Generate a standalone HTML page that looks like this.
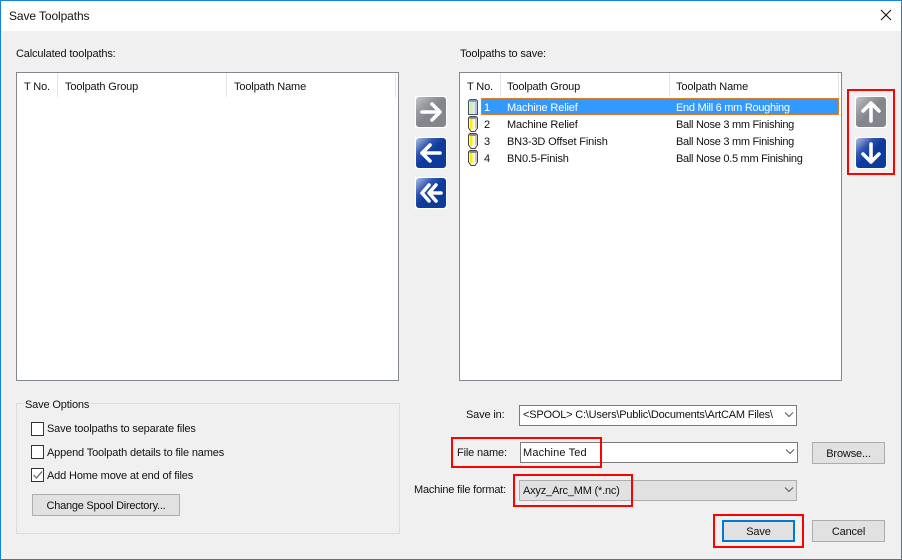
<!DOCTYPE html>
<html><head><meta charset="utf-8"><title>Save Toolpaths</title>
<style>
html,body{margin:0;padding:0;background:#f0f0f0}
#w{position:relative;width:902px;height:560px;overflow:hidden;background:#f0f0f0;font-family:"Liberation Sans",sans-serif;font-size:11px;color:#111;letter-spacing:-.15px}
#w div,#w svg{position:absolute;box-sizing:border-box}
.t{position:absolute;white-space:nowrap;line-height:16px;height:16px}
.n{letter-spacing:-.28px}
.list{background:#fff;border:1px solid #828790}
.sep{width:1px;background:#e5e5e5;top:73px;height:24px}
.red{border:2px solid #f00}
.btn{background:#e1e1e1;border:1px solid #adadad}
.combo{background:#fff;border:1px solid #7a7a7a}
.cb{background:#fff;border:1px solid #333;width:14px;height:14px}
.w{color:#fff}
</style></head><body>
<div id="w">
<svg width="0" height="0" style="left:0;top:0">
<defs>
<linearGradient id="gb" x1="0" y1="0" x2="1" y2="1"><stop offset="0" stop-color="#b4c2e4"/><stop offset=".3" stop-color="#2f55ae"/><stop offset=".5" stop-color="#0e3a9c"/><stop offset="1" stop-color="#0e3a9c"/></linearGradient>
<linearGradient id="gg" x1="0" y1="0" x2="1" y2="1"><stop offset="0" stop-color="#c2c4c8"/><stop offset=".3" stop-color="#95989e"/><stop offset=".5" stop-color="#83868d"/><stop offset="1" stop-color="#83868d"/></linearGradient>
<g id="tl">
<path d="M0.500 2L2 0.500H8L9.500 2V12L7 15.500H3L0.500 12Z" fill="#f4f4f4" stroke="#444" stroke-width="1"/>
<rect x="2" y="3" width="2.500" height="10" fill="#ffee00"/>
<rect x="1.500" y="1" width="7" height="2" fill="#8c8c8c"/>
<rect x="7" y="3" width="2" height="9" fill="#c8c8c8"/>
</g>
<g id="tls">
<path d="M0.500 2L2 0.500H8L9.500 2V15.500H0.500Z" fill="#dbe9f5" stroke="#3f5468" stroke-width="1"/>
<rect x="2" y="3" width="2.500" height="12" fill="#dcebb0"/>
<rect x="1.500" y="1" width="7" height="2" fill="#7fa0bd"/>
<rect x="7" y="3" width="2" height="12" fill="#a9c6e0"/>
</g>
</defs></svg>

<!-- frame -->
<div style="left:0;top:0;width:902px;height:31px;background:#fff"></div>
<div style="left:0;top:0;width:902px;height:560px;border:1px solid #1583d8"></div>
<span class="t" style="left:9px;top:8px;font-size:12px;letter-spacing:-.1px">Save Toolpaths</span>
<svg style="left:880px;top:9px" width="12" height="12" viewBox="0 0 12 12"><path d="M1 1L11 11M11 1L1 11" stroke="#111" stroke-width="1.100" fill="none"/></svg>

<!-- left list -->
<span class="t" style="left:16px;top:46px">Calculated toolpaths:</span>
<div class="list" style="left:16px;top:72px;width:383px;height:309px"></div>
<div class="sep" style="left:57px"></div><div class="sep" style="left:226px"></div><div class="sep" style="left:395px"></div>
<span class="t" style="left:24px;top:79px">T No.</span>
<span class="t" style="left:65px;top:79px">Toolpath Group</span>
<span class="t" style="left:234px;top:79px">Toolpath Name</span>

<!-- right list -->
<span class="t" style="left:460px;top:46px">Toolpaths to save:</span>
<div class="list" style="left:459px;top:72px;width:383px;height:309px"></div>
<div class="sep" style="left:500px"></div><div class="sep" style="left:669px"></div><div class="sep" style="left:838px"></div>
<span class="t" style="left:467px;top:79px">T No.</span>
<span class="t" style="left:507px;top:79px">Toolpath Group</span>
<span class="t" style="left:676px;top:79px">Toolpath Name</span>

<div style="left:481px;top:98px;width:358px;height:17px;background:#3399ff;border:1px dotted #e8862a"></div>

<svg style="left:468px;top:99px" width="10" height="16" viewBox="0 0 10 16"><use href="#tls"/></svg>
<svg style="left:468px;top:116px" width="10" height="16" viewBox="0 0 10 16"><use href="#tl"/></svg>
<svg style="left:468px;top:133px" width="10" height="16" viewBox="0 0 10 16"><use href="#tl"/></svg>
<svg style="left:468px;top:150px" width="10" height="16" viewBox="0 0 10 16"><use href="#tl"/></svg>

<span class="t w" style="left:484px;top:100px">1</span>
<span class="t w" style="left:507px;top:100px">Machine Relief</span>
<span class="t w n" style="left:676px;top:100px">End Mill 6 mm Roughing</span>
<span class="t" style="left:484px;top:117px">2</span>
<span class="t" style="left:507px;top:117px">Machine Relief</span>
<span class="t n" style="left:676px;top:117px">Ball Nose 3 mm Finishing</span>
<span class="t" style="left:484px;top:134px">3</span>
<span class="t" style="left:507px;top:134px">BN3-3D Offset Finish</span>
<span class="t n" style="left:676px;top:134px">Ball Nose 3 mm Finishing</span>
<span class="t" style="left:484px;top:151px">4</span>
<span class="t" style="left:507px;top:151px">BN0.5-Finish</span>
<span class="t n" style="left:676px;top:151px">Ball Nose 0.5 mm Finishing</span>

<!-- transfer arrows -->
<svg style="left:415px;top:96px" width="32" height="32" viewBox="0 0 32 32"><rect width="32" height="32" fill="#fff"/><rect x="1" y="1" width="30" height="30" rx="3" fill="url(#gg)"/><path d="M7 16H25M17 8L25 16L17 24" fill="none" stroke="#fff" stroke-width="3.600" stroke-linecap="round" stroke-linejoin="round"/></svg>
<svg style="left:415px;top:137px" width="32" height="32" viewBox="0 0 32 32"><rect width="32" height="32" fill="#fff"/><rect x="1" y="1" width="30" height="30" rx="3" fill="url(#gb)"/><path d="M25 16H7M15 8L7 16L15 24" fill="none" stroke="#fff" stroke-width="3.600" stroke-linecap="round" stroke-linejoin="round"/></svg>
<svg style="left:415px;top:177px" width="32" height="32" viewBox="0 0 32 32"><rect width="32" height="32" fill="#fff"/><rect x="1" y="1" width="30" height="30" rx="3" fill="url(#gb)"/><path d="M14 8L7 16L14 24M21 8L14 16L21 24M17 16H26" fill="none" stroke="#fff" stroke-width="3.600" stroke-linecap="round" stroke-linejoin="round"/></svg>

<!-- up/down -->
<div class="red" style="left:847px;top:89px;width:48px;height:86px"></div>
<svg style="left:855px;top:96px" width="32" height="32" viewBox="0 0 32 32"><rect width="32" height="32" fill="#fff"/><rect x="1" y="1" width="30" height="30" rx="3" fill="url(#gg)"/><path d="M16 25V7M8 15L16 7L24 15" fill="none" stroke="#fff" stroke-width="3.600" stroke-linecap="round" stroke-linejoin="round"/></svg>
<svg style="left:855px;top:137px" width="32" height="32" viewBox="0 0 32 32"><rect width="32" height="32" fill="#fff"/><rect x="1" y="1" width="30" height="30" rx="3" fill="url(#gb)"/><path d="M16 7V25M8 17L16 25L24 17" fill="none" stroke="#fff" stroke-width="3.600" stroke-linecap="round" stroke-linejoin="round"/></svg>

<!-- save options -->
<div style="left:16px;top:403px;width:384px;height:131px;border:1px solid #dcdcdc"></div>
<span class="t" style="left:23px;top:397px;background:#f0f0f0;padding:0 2px">Save Options</span>
<div class="cb" style="left:31px;top:422px;width:13px;height:14px"></div>
<span class="t" style="left:47px;top:421px">Save toolpaths to separate files</span>
<div class="cb" style="left:31px;top:445px;width:13px;height:14px"></div>
<span class="t" style="left:47px;top:445px">Append Toolpath details to file names</span>
<div class="cb" style="left:31px;top:468px;width:13px;height:14px"></div>
<svg style="left:31px;top:468px" width="14" height="14" viewBox="0 0 14 14"><path d="M2.500 7L5.500 10L11 3.500" fill="none" stroke="#777" stroke-width="1.400"/></svg>
<span class="t" style="left:47px;top:468px">Add Home move at end of files</span>
<div class="btn" style="left:32px;top:494px;width:148px;height:22px"></div>
<span class="t" style="left:32px;top:498px;width:148px;text-align:center;letter-spacing:-.25px">Change Spool Directory...</span>

<!-- file rows -->
<span class="t" style="left:466px;top:407px">Save in:</span>
<div class="combo" style="left:519px;top:405px;width:278px;height:21px"></div>
<span class="t" style="left:523px;top:407px;width:255px;overflow:hidden;letter-spacing:-.2px">&lt;SPOOL&gt; C:\Users\Public\Documents\ArtCAM Files\</span>
<svg style="left:784px;top:411px" width="10" height="8" viewBox="0 0 10 8"><path d="M1 1.500L5 5.500L9 1.500" fill="none" stroke="#555" stroke-width="1"/></svg>

<div class="combo" style="left:520px;top:442px;width:278px;height:21px"></div>
<span class="t" style="left:457px;top:445px">File name:</span>
<span class="t" style="left:523px;top:445px;letter-spacing:.15px">Machine Ted</span>
<svg style="left:785px;top:448px" width="10" height="8" viewBox="0 0 10 8"><path d="M1 1.500L5 5.500L9 1.500" fill="none" stroke="#555" stroke-width="1"/></svg>
<div class="red" style="left:451px;top:437px;width:151px;height:31px"></div>

<span class="t" style="left:414px;top:482px;letter-spacing:-.2px">Machine file format:</span>
<div class="btn" style="left:519px;top:480px;width:278px;height:21px"></div>
<span class="t" style="left:523px;top:483px;letter-spacing:-.2px">Axyz_Arc_MM (*.nc)</span>
<svg style="left:784px;top:486px" width="10" height="8" viewBox="0 0 10 8"><path d="M1 1.500L5 5.500L9 1.500" fill="none" stroke="#555" stroke-width="1"/></svg>
<div class="red" style="left:513px;top:474px;width:120px;height:33px"></div>

<div class="btn" style="left:812px;top:442px;width:73px;height:22px"></div>
<span class="t" style="left:812px;top:446px;width:73px;text-align:center">Browse...</span>

<div class="btn" style="left:722px;top:520px;width:73px;height:22px;border:2px solid #0078d7"></div>
<span class="t" style="left:722px;top:524px;width:73px;text-align:center">Save</span>
<div class="red" style="left:713px;top:514px;width:91px;height:34px"></div>
<div class="btn" style="left:812px;top:520px;width:73px;height:22px"></div>
<span class="t" style="left:812px;top:524px;width:73px;text-align:center">Cancel</span>
</div>
</body></html>
